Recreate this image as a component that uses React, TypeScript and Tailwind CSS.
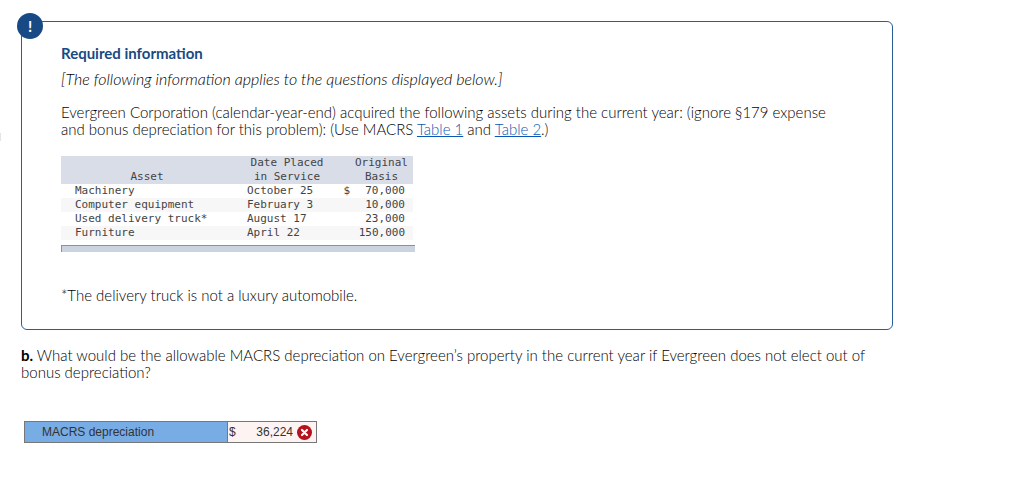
import React from 'react';

const assets = [
  { name: 'Machinery', date: 'October 25', sign: '$', basis: '70,000' },
  { name: 'Computer equipment', date: 'February 3', sign: '', basis: '10,000' },
  { name: 'Used delivery truck*', date: 'August 17', sign: '', basis: '23,000' },
  { name: 'Furniture', date: 'April 22', sign: '', basis: '150,000' },
];

const AssetTable = () => {
  return (
    <div className="mt-[18px] w-[354px] font-['DejaVu_Sans_Mono',monospace] text-[11px] leading-[14px] font-normal text-[#444]">
      <table className="w-[352px] table-fixed border-collapse">
        <colgroup>
          <col className="w-[172px]" />
          <col className="w-[108px]" />
          <col className="w-[9px]" />
          <col className="w-[63px]" />
        </colgroup>
        <thead>
          <tr className="bg-[#d9dde8] align-bottom">
            <th className="p-0 text-center font-normal">Asset</th>
            <th className="p-0 text-center font-normal">Date Placed<br />in Service</th>
            <th className="p-0"></th>
            <th className="p-0 text-center font-normal">Original<br />Basis</th>
          </tr>
        </thead>
        <tbody>
          {assets.map((asset) => (
            <tr key={asset.name} className="even:bg-[#f7f7f7]">
              <td className="p-0 pl-[14px]">{asset.name}</td>
              <td className="p-0 pl-[14px]">{asset.date}</td>
              <td className="p-0 text-right">{asset.sign}</td>
              <td className="p-0 pr-2 text-right">{asset.basis}</td>
            </tr>
          ))}
        </tbody>
      </table>
      {/* Scroll track under the table */}
      <div className="mt-[5px] h-[7px] border-t border-l border-[#8c919b] bg-[#ccd3e0]"></div>
    </div>
  );
};

const App = () => {
  return (
    <main className="relative min-h-screen bg-white pt-[21px] pr-[131px] pb-8 pl-[21px] font-[Lato,sans-serif] text-[15px] leading-[17px] font-light text-black">
      {/* Edge of the collapsed side tab */}
      <div className="absolute top-[133px] left-0 h-2 w-px bg-[#e4e4e4]"></div>

      {/* Required information */}
      <section className="relative rounded-md border border-[#2b5c96] px-[39px] pt-[23px] pb-[25px]">
        <span className="absolute -top-[9px] -left-[5px] flex size-[26px] items-center justify-center rounded-full bg-[#174a84] font-bold text-white">!</span>
        <h1 className="font-bold text-[#174a84]">Required information</h1>
        <p className="mt-2 text-[16px] leading-[17px] italic">[The following information applies to the questions displayed below.]</p>
        <p className="mt-[17px]">
          Evergreen Corporation (calendar-year-end) acquired the following assets during the current year: (ignore §179 expense
          and bonus depreciation for this problem): (Use MACRS{' '}
          <a href="#" className="text-[#0b57b5] underline">Table 1</a> and{' '}
          <a href="#" className="text-[#0b57b5] underline">Table 2</a>.)
        </p>
        <AssetTable />
        <p className="mt-[35px]">*The delivery truck is not a luxury automobile.</p>
      </section>

      {/* Question */}
      <p className="mt-[17px]">
        <b className="font-bold">b.</b> What would be the allowable MACRS depreciation on Evergreen’s property in the current year if Evergreen does not elect out of
        bonus depreciation?
      </p>

      {/* Answer */}
      <div className="mt-10 ml-[3px] flex h-[22px] w-[293px] items-stretch border border-[#777] font-['Liberation_Sans',sans-serif] text-[12px] leading-5 font-normal text-[#333]">
        <label htmlFor="depreciation" className="w-[203px] border-r border-[#777] bg-[#78ace5] pl-[17px]">MACRS depreciation</label>
        <div className="flex flex-1 items-center bg-[#fdf3f2] pr-1 pl-px">
          <span>$</span>
          <input id="depreciation" type="text" defaultValue="36,224" className="w-0 min-w-0 flex-1 bg-transparent text-right outline-none" />
          <svg className="ml-1 size-[15px]" viewBox="0 0 15 15" aria-hidden="true">
            <circle cx="7.5" cy="7.5" r="7.5" fill="#b5121b" />
            <path d="M5 5l5 5M10 5l-5 5" stroke="#fff" strokeWidth="2.2" strokeLinecap="round" />
          </svg>
        </div>
      </div>
    </main>
  );
};

export default App;
